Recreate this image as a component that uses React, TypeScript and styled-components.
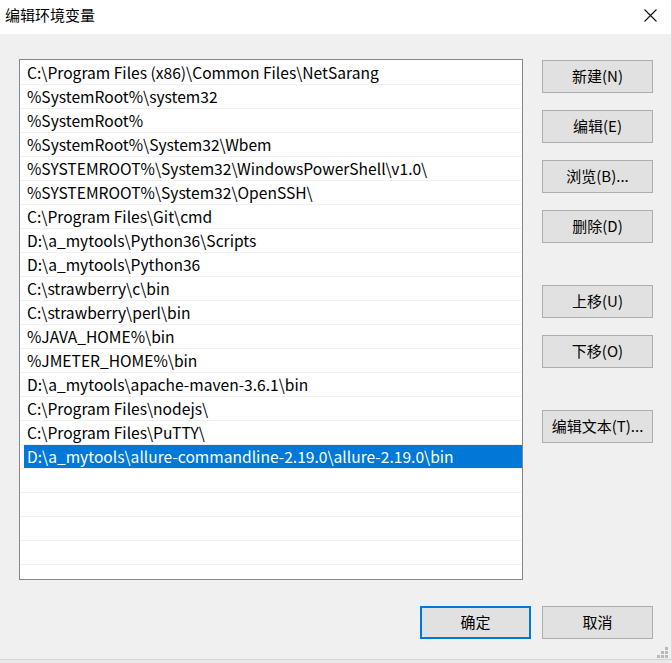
import React from 'react';
import styled, { createGlobalStyle } from 'styled-components';

const paths = [
  'C:\\Program Files (x86)\\Common Files\\NetSarang',
  '%SystemRoot%\\system32',
  '%SystemRoot%',
  '%SystemRoot%\\System32\\Wbem',
  '%SYSTEMROOT%\\System32\\WindowsPowerShell\\v1.0\\',
  '%SYSTEMROOT%\\System32\\OpenSSH\\',
  'C:\\Program Files\\Git\\cmd',
  'D:\\a_mytools\\Python36\\Scripts',
  'D:\\a_mytools\\Python36',
  'C:\\strawberry\\c\\bin',
  'C:\\strawberry\\perl\\bin',
  '%JAVA_HOME%\\bin',
  '%JMETER_HOME%\\bin',
  'D:\\a_mytools\\apache-maven-3.6.1\\bin',
  'C:\\Program Files\\nodejs\\',
  'C:\\Program Files\\PuTTY\\',
  'D:\\a_mytools\\allure-commandline-2.19.0\\allure-2.19.0\\bin',
];

const SELECTED = 16;
const EMPTY_ROWS = 5;

const groups = [
  ['新建(N)', '编辑(E)', '浏览(B)...', '删除(D)'],
  ['上移(U)', '下移(O)'],
  ['编辑文本(T)...'],
];

const App = () => {
  return (
    <>
      <GlobalStyle />
      <Window>
        <TitleBar>
          <Title>编辑环境变量</Title>
          <CloseButton>
            <svg width="13" height="13" viewBox="0 0 13 13">
              <path d="M0.5 0.5 L12.5 12.5 M12.5 0.5 L0.5 12.5" stroke="#111" strokeWidth="1.1" fill="none" />
            </svg>
          </CloseButton>
        </TitleBar>

        <Body>
          <Main>
            <ListBox>
              {paths.map((p, i) => (
                <Row key={i}>
                  <Cell selected={i === SELECTED}>{p}</Cell>
                </Row>
              ))}
              {Array.from({ length: EMPTY_ROWS }).map((_, i) => (
                <Row key={`e${i}`}>
                  <Cell />
                </Row>
              ))}
            </ListBox>

            <ButtonColumn>
              {groups.map((g, gi) => (
                <ButtonGroup key={gi}>
                  {g.map((label) => (
                    <Button key={label}>{label}</Button>
                  ))}
                </ButtonGroup>
              ))}
            </ButtonColumn>
          </Main>

          <Footer>
            <Button primary>确定</Button>
            <Button>取消</Button>
          </Footer>
        </Body>

        <SizeGrip>
          <svg width="12" height="12" viewBox="0 0 12 12" fill="#b9b9b9">
            <rect x="8" y="0" width="3" height="3" />
            <rect x="4" y="4" width="3" height="3" />
            <rect x="8" y="4" width="3" height="3" />
            <rect x="0" y="8" width="3" height="3" />
            <rect x="4" y="8" width="3" height="3" />
            <rect x="8" y="8" width="3" height="3" />
          </svg>
        </SizeGrip>
      </Window>
    </>
  );
};

const GlobalStyle = createGlobalStyle`
  html, body {
    margin: 0;
    padding: 0;
    background: #e9e9e9;
  }
  body {
    font-family: "Noto Sans CJK SC", "Noto Sans", sans-serif;
    font-size: 15px;
    color: #000;
  }
`;

const Window = styled.div`
  position: relative;
  width: 671px;
  height: 659px;
  background: #f0f0f0;
  border-right: 1px solid #d9d9d9;
  border-bottom: 1px solid #d2d2d2;
  display: flex;
  flex-direction: column;
`;

const TitleBar = styled.div`
  height: 34px;
  background: #fff;
  display: flex;
  align-items: center;
  justify-content: space-between;
  padding: 0 14px 0 5px;
`;

const Title = styled.div`
  font-size: 15px;
  line-height: 20px;
  margin-top: -4px;
`;

const CloseButton = styled.div`
  display: flex;
  align-items: center;
  margin-top: -4px;
`;

const Body = styled.div`
  flex: 1;
  display: flex;
  flex-direction: column;
  padding: 25px 18px 0 19px;
`;

const Main = styled.div`
  display: flex;
  gap: 19px;
`;

const ListBox = styled.div`
  width: 502px;
  height: 518px;
  padding-top: 1px;
  box-sizing: content-box;
  background: #fff;
  border: 1px solid #828790;
  overflow: hidden;
`;

const Row = styled.div`
  height: 23px;
  border-bottom: 1px solid #f0f0f0;
  display: flex;
`;

const Cell = styled.div<{ selected?: boolean }>`
  flex: 1;
  margin-left: 4px;
  padding-left: 3px;
  font-size: 15.6px;
  line-height: 22px;
  white-space: nowrap;
  background: ${(p) => (p.selected ? '#0078d7' : 'transparent')};
  color: ${(p) => (p.selected ? '#fff' : '#000')};
`;

const ButtonColumn = styled.div`
  display: flex;
  flex-direction: column;
  gap: 42px;
  margin-top: 1px;
`;

const ButtonGroup = styled.div`
  display: flex;
  flex-direction: column;
  gap: 17px;
`;

const Button = styled.button<{ primary?: boolean }>`
  width: 111px;
  height: 33px;
  padding: 0 0 2px;
  box-sizing: border-box;
  font-family: inherit;
  font-size: 15px;
  color: #000;
  background: #e1e1e1;
  border: ${(p) => (p.primary ? '2px solid #0078d7' : '1px solid #adadad')};
`;

const Footer = styled.div`
  display: flex;
  justify-content: flex-end;
  gap: 11px;
  margin-top: 26px;
`;

const SizeGrip = styled.div`
  position: absolute;
  right: 2px;
  bottom: 0px;
  line-height: 0;
`;

export default App;
